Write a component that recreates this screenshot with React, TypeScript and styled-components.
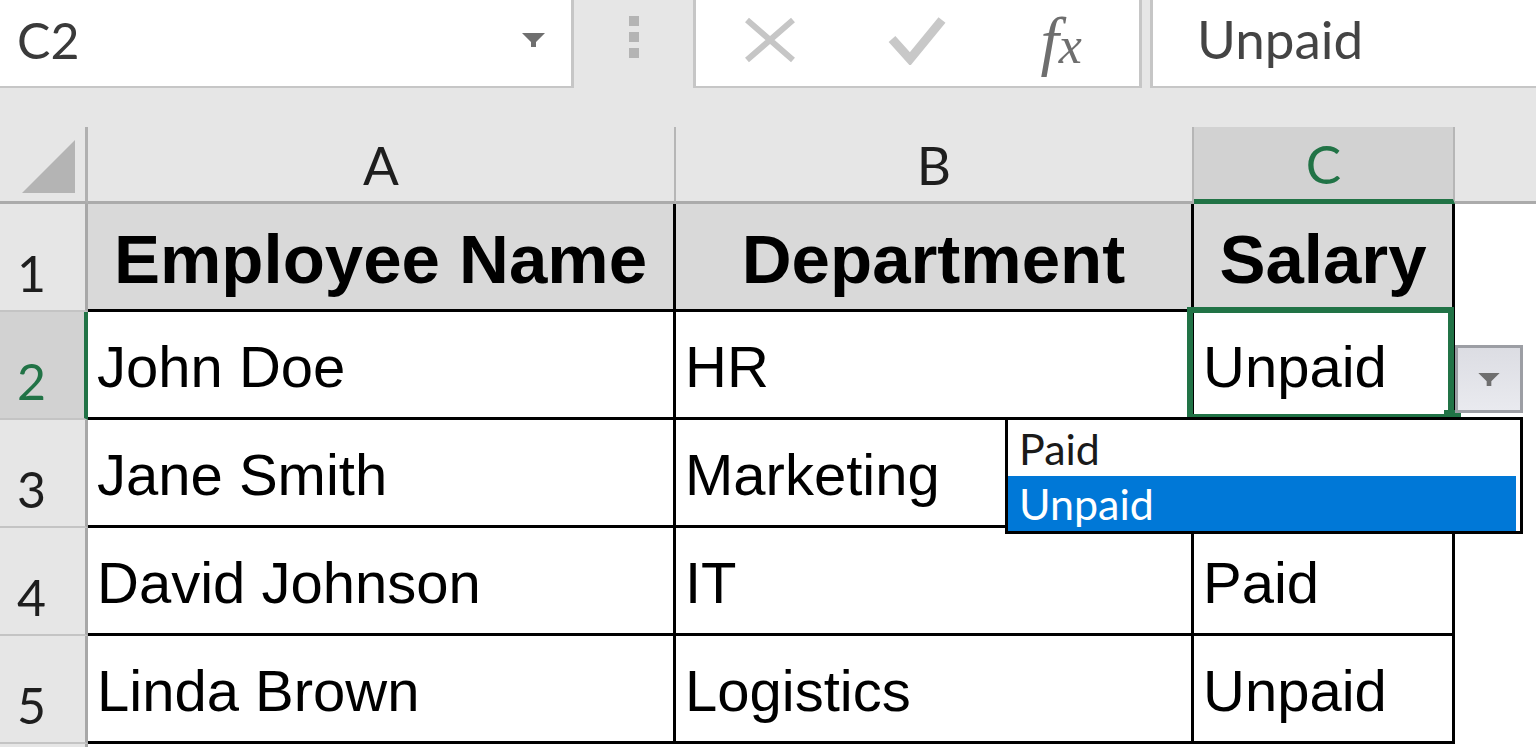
import React from "react";
import styled, { createGlobalStyle, css } from "styled-components";

const GREEN = "#217346";

const Global = createGlobalStyle`
  html, body {
    margin: 0;
    padding: 0;
    background: #e6e6e6;
  }
  body {
    font-family: Lato, "Open Sans", sans-serif;
  }
  * {
    box-sizing: border-box;
  }
`;

const Window = styled.div`
  width: 1536px;
  height: 747px;
  overflow: hidden;
  background: #e6e6e6;
`;

/* ---------- formula bar ---------- */

const FormulaBar = styled.div`
  display: flex;
  height: 88px;
  margin-bottom: 39px;
`;

const NameBox = styled.div`
  width: 574px;
  flex: none;
  display: flex;
  align-items: center;
  justify-content: space-between;
  padding: 0 26px 7px 17px;
  background: #fff;
  border-right: 3px solid #c6c6c6;
  border-bottom: 2px solid #c6c6c6;
`;

const NameText = styled.span`
  font-size: 50px;
  line-height: 1;
  color: #3a3a3a;
`;

const Grip = styled.div`
  width: 119px;
  flex: none;
  display: flex;
  flex-direction: column;
  align-items: center;
  gap: 6px;
  padding-top: 16px;
`;

const GripDot = styled.span`
  width: 10px;
  height: 10px;
  background: #b4b4b4;
`;

const EditButtons = styled.div`
  width: 449px;
  flex: none;
  display: grid;
  grid-template-columns: repeat(3, 1fr);
  align-items: center;
  justify-items: center;
  padding-bottom: 7px;
  background: #fff;
  border-left: 3px solid #c6c6c6;
  border-right: 3px solid #c6c6c6;
  border-bottom: 2px solid #c6c6c6;
`;

const FxLabel = styled.span`
  font-family: "Liberation Serif", "DejaVu Serif", serif;
  font-style: italic;
  color: #6e6e6e;
  line-height: 1.1;
  margin: 4px 8px 0 0;
`;

const FxPart = styled.span<{ $size: number }>`
  font-size: ${(p) => p.$size}px;
`;

const FormulaInput = styled.div`
  flex: 1;
  margin-left: 8px;
  display: flex;
  align-items: center;
  padding: 0 0 10px 44px;
  background: #fff;
  border-left: 3px solid #c6c6c6;
  border-bottom: 2px solid #c6c6c6;
  font-size: 53px;
  line-height: 1;
  color: #444;
`;

/* ---------- sheet ---------- */

const Sheet = styled.div`
  display: grid;
  grid-template-columns: 88px 588px 518px 261px 1fr;
  grid-template-rows: 77px repeat(6, 108px);
`;

const Corner = styled.div`
  display: flex;
  align-items: flex-end;
  justify-content: flex-end;
  padding: 0 10px 8px 0;
  border-right: 3px solid #b0b0b0;
  border-bottom: 3px solid #ababab;
`;

const CornerMark = styled.span`
  width: 53px;
  height: 53px;
  background: #b4b4b4;
  clip-path: polygon(100% 0, 100% 100%, 0 100%);
`;

const ColHeader = styled.div<{ $selected?: boolean; $last?: boolean }>`
  display: flex;
  align-items: center;
  justify-content: center;
  font-size: 53px;
  line-height: 1;
  color: #1e1e1e;
  background: #e6e6e6;
  border-right: ${(p) => (p.$last ? "none" : "2px solid #b6b6b6")};
  border-bottom: 3px solid #ababab;
  ${(p) =>
    p.$selected &&
    css`
      background: #d2d2d2;
      color: ${GREEN};
      border-bottom: 5px solid ${GREEN};
    `}
`;

const RowHeader = styled.div<{ $selected?: boolean }>`
  display: flex;
  align-items: flex-end;
  padding: 0 0 12px 17px;
  font-size: 50px;
  line-height: 1;
  color: #1e1e1e;
  background: #e6e6e6;
  border-right: 3px solid #a8a8a8;
  border-bottom: 2px solid #c4c4c4;
  ${(p) =>
    p.$selected &&
    css`
      background: #d2d2d2;
      color: ${GREEN};
      border-right: 4px solid ${GREEN};
    `}
`;

const Cell = styled.div<{ $head?: boolean }>`
  display: flex;
  align-items: flex-end;
  padding: 0 8px 21px 9px;
  font-family: "Liberation Sans", Arial, sans-serif;
  font-size: 58px;
  line-height: 1;
  color: #000;
  white-space: nowrap;
  background: #fff;
  border-right: 3px solid #000;
  border-bottom: 3px solid #000;
  ${(p) =>
    p.$head &&
    css`
      justify-content: center;
      padding: 0 0 15px;
      font-size: 69px;
      font-weight: 700;
      background: #d9d9d9;
    `}
`;

const ActiveCell = styled(Cell)`
  position: relative;
  z-index: 2;
  overflow: visible;
`;

const BlankCell = styled.div`
  background: #fff;
`;

/* ---------- overlays on the active cell ---------- */

const SelectionFrame = styled.div`
  position: absolute;
  left: -7px;
  top: -5px;
  right: -2px;
  bottom: -3px;
  border: 6px solid ${GREEN};
  pointer-events: none;
`;

const FillHandle = styled.span`
  position: absolute;
  left: 250px;
  top: 98px;
  width: 17px;
  height: 17px;
  background: ${GREEN};
`;

const DropButton = styled.div`
  position: absolute;
  left: 261px;
  top: 33px;
  width: 68px;
  height: 68px;
  display: flex;
  align-items: center;
  justify-content: center;
  border: 3px solid #9c9ea4;
  background: linear-gradient(#dcdde3, #e9eaef);
`;

const DropList = styled.ul`
  position: absolute;
  left: -189px;
  top: 105px;
  width: 518px;
  margin: 0;
  padding: 0 4px 0 0;
  list-style: none;
  background: #fff;
  border: 3px solid #000;
  z-index: 3;
`;

const DropItem = styled.li<{ $active?: boolean; $h: number }>`
  height: ${(p) => p.$h}px;
  display: flex;
  align-items: center;
  padding-left: 11px;
  font-family: Lato, "Open Sans", sans-serif;
  font-size: 43px;
  line-height: 1;
  color: ${(p) => (p.$active ? "#fff" : "#1a1a1a")};
  background: ${(p) => (p.$active ? "#0078d7" : "transparent")};
`;

/* ---------- icons ---------- */

const SmallArrow = ({ w = 23, h = 14 }: { w?: number; h?: number }) => (
  <svg width={w} height={h} viewBox="0 0 23 14">
    <path d="M0 0 H23 L14 9 V14 H9 V9 Z" fill="#6f6f6f" />
  </svg>
);

const CancelIcon = () => (
  <svg width="52" height="46" viewBox="0 0 52 46">
    <path d="M3 3 L49 43 M49 3 L3 43" stroke="#c6c6c6" strokeWidth="6" fill="none" />
  </svg>
);

const EnterIcon = () => (
  <svg width="58" height="50" viewBox="0 0 58 50">
    <path d="M4 24 L22 44 L54 5" stroke="#c8c8c8" strokeWidth="9" fill="none" />
  </svg>
);

const rows = [
  ["John Doe", "HR", "Unpaid"],
  ["Jane Smith", "Marketing", "Paid"],
  ["David Johnson", "IT", "Paid"],
  ["Linda Brown", "Logistics", "Unpaid"],
];

export default function App() {
  return (
    <Window>
      <Global />
      <FormulaBar>
        <NameBox>
          <NameText>C2</NameText>
          <SmallArrow />
        </NameBox>
        <Grip>
          <GripDot />
          <GripDot />
          <GripDot />
        </Grip>
        <EditButtons>
          <CancelIcon />
          <EnterIcon />
          <FxLabel>
            <FxPart $size={66}>f</FxPart>
            <FxPart $size={52}>x</FxPart>
          </FxLabel>
        </EditButtons>
        <FormulaInput>Unpaid</FormulaInput>
      </FormulaBar>

      <Sheet>
        <Corner>
          <CornerMark />
        </Corner>
        <ColHeader>A</ColHeader>
        <ColHeader>B</ColHeader>
        <ColHeader $selected>C</ColHeader>
        <ColHeader $last />

        <RowHeader>1</RowHeader>
        <Cell $head>Employee Name</Cell>
        <Cell $head>Department</Cell>
        <Cell $head>Salary</Cell>
        <BlankCell />

        {rows.map((r, i) => {
          const rowNo = i + 2;
          const active = rowNo === 2;
          return (
            <React.Fragment key={rowNo}>
              <RowHeader $selected={active}>{rowNo}</RowHeader>
              <Cell>{r[0]}</Cell>
              <Cell>{r[1]}</Cell>
              {active ? (
                <ActiveCell>
                  {r[2]}
                  <SelectionFrame />
                  <FillHandle />
                  <DropButton>
                    <SmallArrow w={24} h={13} />
                  </DropButton>
                  <DropList>
                    <DropItem $h={56}>Paid</DropItem>
                    <DropItem $h={55} $active>
                      Unpaid
                    </DropItem>
                  </DropList>
                </ActiveCell>
              ) : (
                <Cell>{r[2]}</Cell>
              )}
              <BlankCell />
            </React.Fragment>
          );
        })}

        <RowHeader />
        <BlankCell />
        <BlankCell />
        <BlankCell />
        <BlankCell />
      </Sheet>
    </Window>
  );
}
